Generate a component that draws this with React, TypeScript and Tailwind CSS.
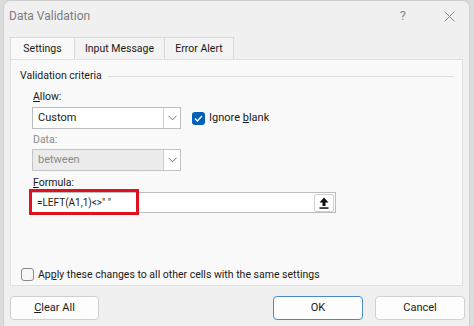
import React from "react";

const font = { fontFamily: 'Roboto, "Noto Sans", sans-serif' };

function Chevron() {
  return (
    <svg width="9" height="6" viewBox="0 0 9 6" fill="none">
      <path d="M0.5 0.8 L4.5 4.8 L8.5 0.8" stroke="#707070" strokeWidth="1" />
    </svg>
  );
}

function Combo({ value, disabled }: { value: string; disabled?: boolean }) {
  return (
    <div
      className={`flex h-[22px] w-[149px] items-stretch border ${
        disabled ? "border-[#c4c4c4] bg-[#ececec]" : "border-[#bdbdbd] bg-white"
      }`}
    >
      <div
        className={`flex flex-1 items-center pl-[5px] text-[11px] ${
          disabled ? "text-[#8a8a8a]" : "text-[#1a1a1a]"
        }`}
      >
        {value}
      </div>
      <div className="flex w-[17px] items-center justify-center border-l border-[#cfcfcf] bg-white">
        <Chevron />
      </div>
    </div>
  );
}

function Check({ checked }: { checked?: boolean }) {
  return checked ? (
    <div className="flex h-[13px] w-[13px] items-center justify-center rounded-[3px] bg-[#005fb8]">
      <svg width="9" height="7" viewBox="0 0 9 7" fill="none">
        <path d="M1 3.6 L3.4 6 L8 1" stroke="white" strokeWidth="1.4" />
      </svg>
    </div>
  ) : (
    <div className="h-[13px] w-[13px] rounded-[3px] border border-[#8a8a8a] bg-[#f7f7f7]" />
  );
}

export default function App() {
  return (
    <div className="h-[326px] w-[474px] overflow-hidden bg-[#dcdcdc]" style={font}>
      <div className="ml-[3px] flex h-[330px] w-[467px] flex-col rounded-t-[7px] border-l border-r border-t border-[#cfcfcf] bg-[#f0f0f0]">
        {/* title bar */}
        <div className="flex h-[30px] items-center pl-[5px] pr-[14px]">
          <span className="text-[12px] text-[#7c7c7c]">Data Validation</span>
          <span className="ml-auto mr-[38px] text-[13px] text-[#8a8a8a]">?</span>
          <svg width="11" height="11" viewBox="0 0 11 11">
            <path d="M0.5 0.5 L10.5 10.5 M10.5 0.5 L0.5 10.5" stroke="#8a8a8a" strokeWidth="1" />
          </svg>
        </div>
        {/* tabs */}
        <div className="mt-[6px] flex h-[22px] pl-[6px] text-[10.5px] text-[#1a1a1a]">
          <div className="flex w-[65px] items-center justify-center border-l border-r border-t border-[#dadada] bg-[#f9f9f9]">
            Settings
          </div>
          <div className="flex w-[90px] items-center justify-center border-r border-t border-[#dadada] bg-[#f3f3f3]">
            Input Message
          </div>
          <div className="flex w-[69px] items-center justify-center border-r border-t border-[#dadada] bg-[#f3f3f3]">
            Error Alert
          </div>
        </div>
        {/* panel */}
        <div className="ml-[6px] flex h-[227px] w-[453px] flex-col border border-[#e0e0e0] bg-[#f9f9f9] pl-[9px] pt-[8px] text-[10.5px] text-[#1a1a1a]">
          <div className="flex h-[16px] items-center">
            <span>Validation criteria</span>
            <div className="ml-[6px] mr-[8px] h-px flex-1 bg-[#dcdcdc]" />
          </div>
          <div className="ml-[12px] flex flex-col">
            <div className="mt-[5px] h-[16px] leading-[16px] pl-[1px]">
              <span className="underline">A</span>llow:
            </div>
            <div className="mt-[2px] flex items-center">
              <Combo value="Custom" />
              <div className="ml-[11px] flex items-center">
                <Check checked />
                <span className="ml-[4px] text-[11px]">
                  Ignore <span className="underline">b</span>lank
                </span>
              </div>
            </div>
            <div className="mt-[3px] h-[16px] pl-[1px] leading-[16px] text-[#8a8a8a]">Data:</div>
            <div className="mt-px">
              <Combo value="between" disabled />
            </div>
            <div className="mt-[4px] h-[16px] pl-[1px] leading-[16px]">
              <span className="underline">F</span>ormula:
            </div>
            <div className="relative ml-[-2px] mt-px w-[306px]">
              <div className="flex h-[21px] items-center border border-[#bdbdbd] bg-white pl-[6px] pr-px">
                <span className="flex-1 text-[10px]">=LEFT(A1,1)&lt;&gt;" "</span>
                <div className="flex h-[18px] w-[20px] items-center justify-center rounded-[2px] border border-[#cfcfcf] bg-white">
                  <svg width="10" height="12" viewBox="0 0 10 12">
                    <path d="M5 0.5 L9.5 5.5 L6.5 5.5 L6.5 9 L3.5 9 L3.5 5.5 L0.5 5.5 Z" fill="#111" />
                    <rect x="0.5" y="10.3" width="9" height="1.5" fill="#111" />
                  </svg>
                </div>
              </div>
              <div className="absolute left-[-1px] top-[-3px] h-[26px] w-[110px] border-[3px] border-[#e0101e]" />
            </div>
          </div>
          <div className="mt-[54px] flex items-center pl-px">
            <Check />
            <span className="ml-[4px]">
              Ap<span className="underline">p</span>ly these changes to all other cells with the same settings
            </span>
          </div>
        </div>
        {/* buttons */}
        <div className="mt-[10px] flex pl-[6px] text-[11px] text-[#1a1a1a]">
          <div className="flex h-[24px] w-[89px] items-center justify-center rounded-[4px] border border-[#d0d0d0] bg-[#fdfdfd]">
            <span><span className="underline">C</span>lear All</span>
          </div>
          <div className="ml-auto flex h-[24px] w-[90px] items-center justify-center rounded-[4px] border border-[#4a88c8] bg-[#fdfdfd]">
            OK
          </div>
          <div className="ml-[12px] mr-[4px] flex h-[24px] w-[90px] items-center justify-center rounded-[4px] border border-[#d0d0d0] bg-[#fdfdfd]">
            Cancel
          </div>
        </div>
      </div>
    </div>
  );
}
